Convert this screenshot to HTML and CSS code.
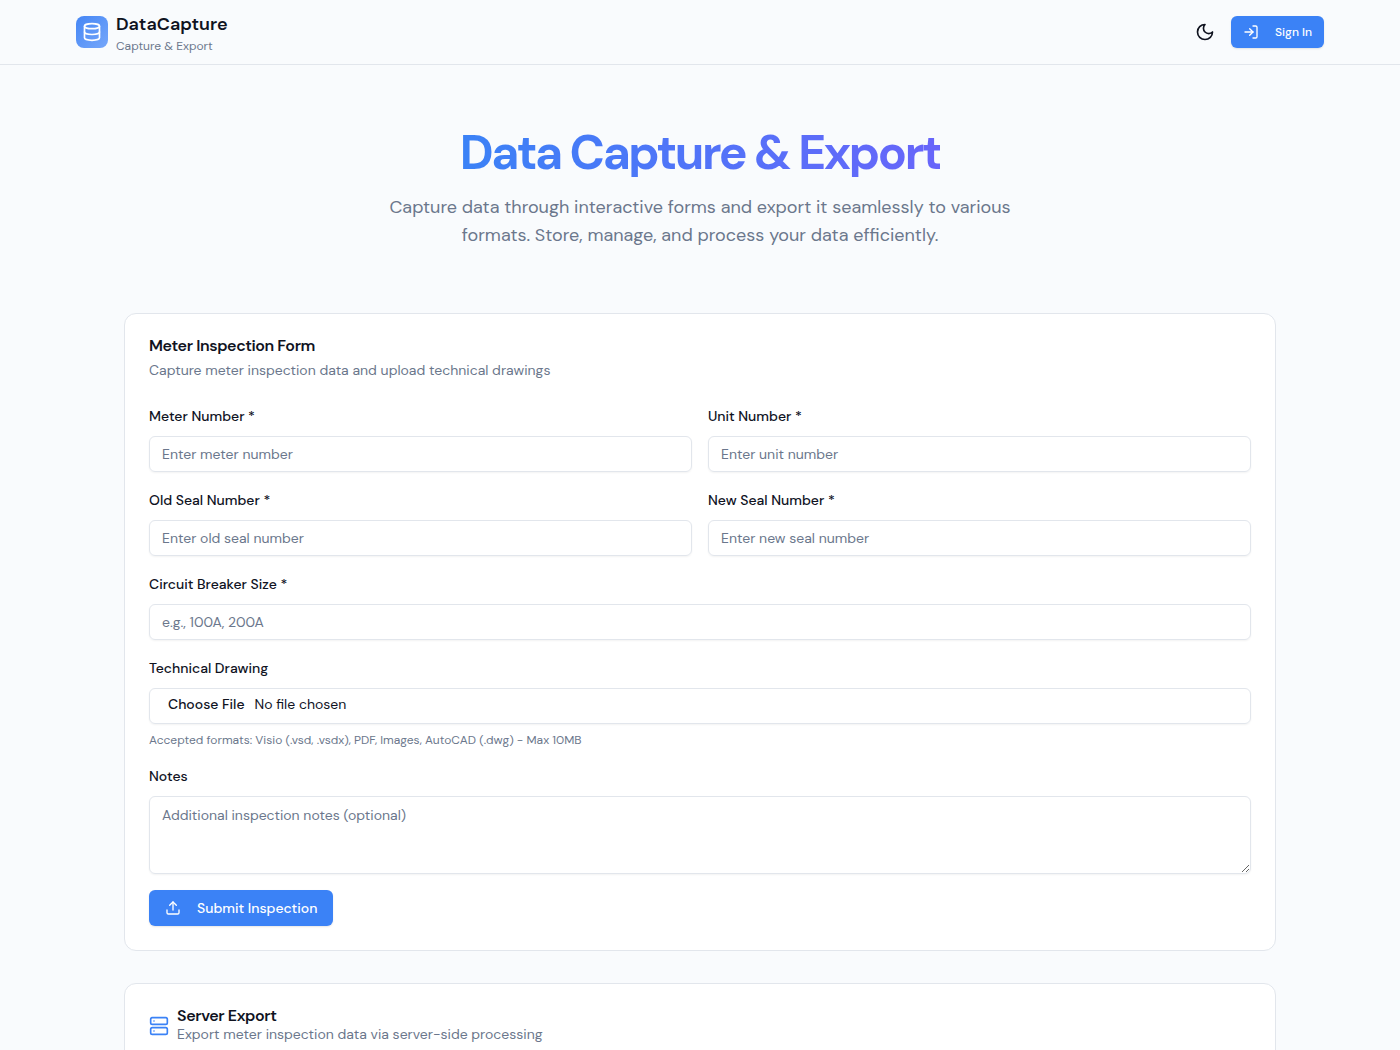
FILE: index.html
```html
<!DOCTYPE html>
<html lang="en">
<head>
  <meta charset="UTF-8">
  <meta name="viewport" content="width=device-width, initial-scale=1.0">
  <title>DataCapture - Capture &amp; Export</title>
  <link rel="stylesheet" href="styles.css">
</head>
<body>
  <header class="site-header">
    <div class="header-inner">
      <div class="brand">
        <div class="brand-logo">
          <svg class="icon icon-md" viewBox="0 0 24 24"><ellipse cx="12" cy="5" rx="9" ry="3"/><path d="M3 5v14a9 3 0 0 0 18 0V5"/><path d="M3 12a9 3 0 0 0 18 0"/></svg>
        </div>
        <div>
          <div class="brand-name">DataCapture</div>
          <div class="brand-tagline">Capture &amp; Export</div>
        </div>
      </div>
      <div class="header-actions">
        <button type="button" class="btn-icon" aria-label="Toggle theme">
          <svg class="icon icon-md" viewBox="0 0 24 24"><path d="M12 3a6 6 0 0 0 9 9 9 9 0 1 1-9-9Z"/></svg>
        </button>
        <button type="button" class="btn btn-small">
          <svg class="icon icon-sm" viewBox="0 0 24 24"><path d="M15 3h4a2 2 0 0 1 2 2v14a2 2 0 0 1-2 2h-4"/><path d="m10 17 5-5-5-5"/><path d="M15 12H3"/></svg>
          Sign In
        </button>
      </div>
    </div>
  </header>

  <main class="container">
    <section class="hero">
      <h1>Data Capture &amp; Export</h1>
      <p>Capture data through interactive forms and export it seamlessly to various formats. Store, manage, and process your data efficiently.</p>
    </section>

    <section class="card">
      <div class="card-header">
        <h2>Meter Inspection Form</h2>
        <p>Capture meter inspection data and upload technical drawings</p>
      </div>
      <form id="inspectionForm" class="form">
        <div class="form-row">
          <div class="field">
            <label for="meterNumber">Meter Number *</label>
            <input type="text" id="meterNumber" placeholder="Enter meter number" required>
          </div>
          <div class="field">
            <label for="unitNumber">Unit Number *</label>
            <input type="text" id="unitNumber" placeholder="Enter unit number" required>
          </div>
        </div>
        <div class="form-row">
          <div class="field">
            <label for="oldSeal">Old Seal Number *</label>
            <input type="text" id="oldSeal" placeholder="Enter old seal number" required>
          </div>
          <div class="field">
            <label for="newSeal">New Seal Number *</label>
            <input type="text" id="newSeal" placeholder="Enter new seal number" required>
          </div>
        </div>
        <div class="field">
          <label for="breakerSize">Circuit Breaker Size *</label>
          <input type="text" id="breakerSize" placeholder="e.g., 100A, 200A" required>
        </div>
        <div class="field">
          <label for="drawing">Technical Drawing</label>
          <input type="file" id="drawing" accept=".vsd,.vsdx,.pdf,.dwg,image/*">
          <p class="hint">Accepted formats: Visio (.vsd, .vsdx), PDF, Images, AutoCAD (.dwg) - Max 10MB</p>
        </div>
        <div class="field">
          <label for="notes">Notes</label>
          <textarea id="notes" placeholder="Additional inspection notes (optional)"></textarea>
        </div>
        <button type="submit" class="btn">
          <svg class="icon icon-sm" viewBox="0 0 24 24"><path d="M21 15v4a2 2 0 0 1-2 2H5a2 2 0 0 1-2-2v-4"/><path d="m17 8-5-5-5 5"/><path d="M12 3v12"/></svg>
          Submit Inspection
        </button>
      </form>
    </section>

    <section class="card export">
      <svg class="icon icon-md" viewBox="0 0 24 24"><rect x="2" y="2" width="20" height="8" rx="2"/><rect x="2" y="14" width="20" height="8" rx="2"/><path d="M6 6h.01M6 18h.01"/></svg>
      <div>
        <h2>Server Export</h2>
        <p>Export meter inspection data via server-side processing</p>
      </div>
    </section>
  </main>
</body>
</html>
```
FILE: styles.css
```css
:root {
  --primary: #3b82f6;
  --accent: #6865fa;
  --background: #f9fbfd;
  --card: #ffffff;
  --text: #10131f;
  --muted: #6b778c;
  --border: #e2e6ec;
}

* {
  box-sizing: border-box;
}

body {
  font-family: "DM Sans", Inter, "Open Sans", sans-serif;
  font-size: 14px;
  line-height: 20px;
  background-color: var(--background);
  color: var(--text);
  margin: 0;
}

h1, h2, p {
  margin: 0;
}

.icon {
  fill: none;
  stroke: currentColor;
  stroke-width: 2;
  stroke-linecap: round;
  stroke-linejoin: round;
  flex-shrink: 0;
}

.icon-sm {
  width: 16px;
  height: 16px;
}

.icon-md {
  width: 20px;
  height: 20px;
}

/* Header */
.site-header {
  border-bottom: 1px solid var(--border);
}

.header-inner {
  display: flex;
  align-items: center;
  justify-content: space-between;
  max-width: 1280px;
  height: 64px;
  margin: 0 auto;
  padding: 0 16px;
}

.brand,
.header-actions {
  display: flex;
  align-items: center;
  gap: 8px;
}

.brand-logo {
  display: flex;
  align-items: center;
  justify-content: center;
  width: 32px;
  height: 32px;
  border-radius: 8px;
  background: linear-gradient(135deg, #4586f5, #76a7fa);
  color: white;
}

.brand-name {
  font-size: 18px;
  line-height: 28px;
  font-weight: 600;
}

.brand-tagline {
  font-size: 12px;
  line-height: 16px;
  color: var(--muted);
}

/* Buttons */
.btn {
  display: inline-flex;
  align-items: center;
  gap: 16px;
  height: 36px;
  padding: 0 16px;
  border: none;
  border-radius: 6px;
  background-color: var(--primary);
  color: white;
  font: inherit;
  font-weight: 500;
  box-shadow: 0 1px 2px rgba(0, 0, 0, 0.1);
  cursor: pointer;
}

.btn:hover {
  background-color: #2f76ea;
}

.btn-small {
  height: 32px;
  padding: 0 12px;
  font-size: 12px;
}

.btn-icon {
  display: flex;
  align-items: center;
  justify-content: center;
  width: 36px;
  height: 36px;
  padding: 0;
  border: none;
  border-radius: 6px;
  background: none;
  color: inherit;
  cursor: pointer;
}

/* Page */
.container {
  max-width: 1184px;
  margin: 0 auto;
  padding: 64px 16px;
}

.hero {
  margin-bottom: 64px;
  text-align: center;
}

.hero h1 {
  width: fit-content;
  margin: 0 auto 16px;
  font-size: 48px;
  line-height: 48px;
  font-weight: 700;
  letter-spacing: -0.05em;
  background: linear-gradient(90deg, var(--primary), var(--accent));
  -webkit-background-clip: text;
  background-clip: text;
  color: transparent;
}

.hero p {
  max-width: 672px;
  margin: 0 auto;
  font-size: 18px;
  line-height: 28px;
  color: var(--muted);
}

.card {
  margin-bottom: 32px;
  padding: 24px;
  border: 1px solid var(--border);
  border-radius: 12px;
  background-color: var(--card);
}

.card h2 {
  font-size: 16px;
  line-height: 16px;
  font-weight: 600;
  letter-spacing: -0.025em;
}

.card p {
  color: var(--muted);
}

.card-header {
  display: grid;
  gap: 6px;
  margin-bottom: 24px;
}

/* Form */
.form {
  display: flex;
  flex-direction: column;
  align-items: flex-start;
  gap: 16px;
}

.form-row {
  display: grid;
  grid-template-columns: 1fr 1fr;
  gap: 16px;
  width: 100%;
}

.field {
  display: flex;
  flex-direction: column;
  gap: 8px;
  width: 100%;
}

.field label {
  line-height: 24px;
  font-weight: 500;
}

.field input,
.field textarea {
  width: 100%;
  height: 36px;
  padding: 4px 12px;
  border: 1px solid var(--border);
  border-radius: 6px;
  background-color: transparent;
  color: var(--text);
  font: inherit;
  box-shadow: 0 1px 2px rgba(0, 0, 0, 0.05);
}

.field textarea {
  height: 78px;
  padding: 8px 12px;
  resize: vertical;
}

.field ::placeholder {
  color: var(--muted);
}

.field input::file-selector-button {
  margin: 0 4px 0 0;
  padding: 1px 6px;
  border: none;
  background: transparent;
  color: var(--text);
  font: inherit;
  font-weight: 500;
}

.field .hint {
  font-size: 12px;
  line-height: 16px;
}

.export {
  display: flex;
  align-items: center;
  gap: 8px;
}

.export .icon {
  color: var(--primary);
}

@media (max-width: 640px) {
  .form-row {
    grid-template-columns: 1fr;
  }
}
```
